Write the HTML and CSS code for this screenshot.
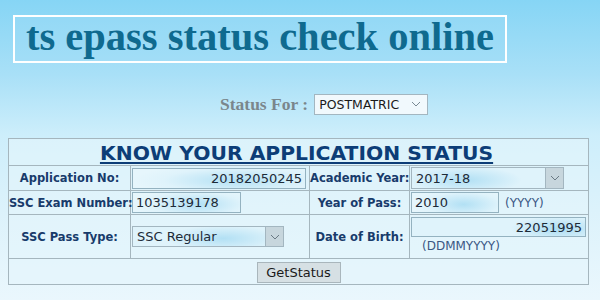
FILE: index.html
```html
<!DOCTYPE html>
<html>
<head>
<meta charset="utf-8">
<link rel="stylesheet" href="styles.css">
</head>
<body>
<div class="page">
  <header class="banner"><h1 class="banner-title">ts epass status check online</h1></header>
  <div class="status-for">
    <span class="status-label">Status For :</span>
    <span class="sel sel-plain">
      <select class="sel-input"><option>POSTMATRIC</option></select>
      <span class="chev"><svg width="10" height="6" viewBox="0 0 10 6"><path d="M1 1 L5 5 L9 1" fill="none" stroke="#7a8a94" stroke-width="1"/></svg></span>
    </span>
  </div>
  <table class="status-table">
    <colgroup><col class="c1"><col class="c2"><col class="c3"><col class="c4"></colgroup>
    <tr class="r-title"><th colspan="4"><span class="table-title">KNOW YOUR APPLICATION STATUS</span></th></tr>
    <tr class="r1">
      <td class="lbl">Application No:</td>
      <td class="fld"><input class="txt txt-app" value="20182050245"></td>
      <td class="lbl">Academic Year:</td>
      <td class="fld"><span class="sel sel-year"><select class="sel-input"><option>2017-18</option></select><span class="arrow"><svg width="10" height="6" viewBox="0 0 10 6"><path d="M1 1 L5 5 L9 1" fill="none" stroke="#6a7a84" stroke-width="1"/></svg></span></span></td>
    </tr>
    <tr class="r2">
      <td class="lbl">SSC Exam Number:</td>
      <td class="fld"><input class="txt txt-ssc" value="1035139178"></td>
      <td class="lbl">Year of Pass:</td>
      <td class="fld"><div class="inline-row"><input class="txt txt-yop" value="2010"><span class="hint">(YYYY)</span></div></td>
    </tr>
    <tr class="r3">
      <td class="lbl">SSC Pass Type:</td>
      <td class="fld"><span class="sel sel-type"><select class="sel-input"><option>SSC Regular</option></select><span class="arrow"><svg width="10" height="6" viewBox="0 0 10 6"><path d="M1 1 L5 5 L9 1" fill="none" stroke="#6a7a84" stroke-width="1"/></svg></span></span></td>
      <td class="lbl">Date of Birth:</td>
      <td class="fld fld-dob"><input class="txt txt-dob" value="22051995"><div class="hint hint-dob">(DDMMYYYY)</div></td>
    </tr>
    <tr class="r4"><td colspan="4" class="btn-cell"><button class="btn">GetStatus</button></td></tr>
  </table>
</div>
</body>
</html>
```
FILE: styles.css
```css
html, body { margin: 0; padding: 0; }
body {
  width: 600px; height: 300px; overflow: hidden;
  background: linear-gradient(180deg, #86d5f5 0%, #a9e0f7 25%, #cdeefb 45%, #dcf2fb 70%, #eaf7fd 100%);
  font-family: "DejaVu Sans", Verdana, sans-serif;
}
.page { padding-top: 15px; }
.banner { margin-left: 13px; width: 490px; border: 2px solid #ffffff; background: rgba(160, 222, 246, 0.35); height: 44px; display: flex; align-items: center; justify-content: center; }
.banner-title { margin: 0; font-family: "Liberation Serif", "Times New Roman", serif; font-weight: bold; font-size: 40.5px; line-height: 44px; color: #0f6a8f; white-space: nowrap; letter-spacing: 0; position: relative; top: -2px; }
.status-for { margin-top: 30px; padding-left: 220px; display: flex; align-items: center; gap: 6px; height: 22px; }
.status-label { font-family: "Liberation Serif", "Times New Roman", serif; font-weight: bold; font-size: 17.5px; color: #7a868c; }
.sel { display: inline-flex; align-items: stretch; box-sizing: border-box; border: 1px solid #a3b6c0; }
.sel-input { appearance: none; -webkit-appearance: none; border: none; background: transparent; font-family: "DejaVu Sans", Verdana, sans-serif; font-size: 13px; color: #1d2b38; padding: 0 0 0 4px; margin: 0; flex: 1; outline: none; }
.sel-plain { width: 114px; height: 21px; background: #f1f9fd; }
.sel-plain .sel-input { font-size: 12.5px; padding-left: 4px; color: #1a1a1a; }
.chev { display: flex; align-items: center; padding: 0 6px 0 2px; }
.arrow { width: 17px; display: flex; align-items: center; justify-content: center; background: #c7d6dd; border-left: 1px solid #a3b6c0; }
.status-table { margin-top: 23px; margin-left: 8px; width: 580px; border-collapse: collapse; table-layout: fixed; border: 1px solid #9eb0b8; background: rgba(228, 245, 252, 0.6); }
.c1 { width: 122px; } .c2 { width: 179px; } .c3 { width: 100px; } .c4 { width: 179px; }
.status-table td, .status-table th { border: 1px solid #a5b6be; padding: 0; }
.r-title th { height: 26px; text-align: center; vertical-align: bottom; padding-bottom: 0; }
.table-title { font-family: "DejaVu Sans", Verdana, sans-serif; font-weight: bold; font-size: 20.3px; color: #0c3d77; text-decoration: underline; text-underline-offset: 2px; letter-spacing: 0; line-height: 24px; position: relative; left: -2px; }
.r1 td { height: 24px; } .r2 td { height: 23px; } .r3 td { height: 41px; } .r4 td { height: 25px; }
.lbl { text-align: center; font-weight: bold; font-size: 11.5px; color: #183b6b; white-space: nowrap; }
.fld { padding-left: 1px !important; }
.txt { box-sizing: border-box; border: 1px solid #94b2c0; height: 21px; font-family: "DejaVu Sans", Verdana, sans-serif; font-size: 13px; color: #1d2b38; padding: 0 3px; margin: 0; outline: none; display: block;
  background: radial-gradient(ellipse 60% 90% at 60% 60%, #b2e0f4 0%, #dff3fb 70%, #e6f6fc 100%); }
.txt-app { width: 174px; text-align: right; }
.txt-ssc { width: 109px; }
.sel-year { width: 153px; height: 22px; background: radial-gradient(ellipse 50% 90% at 35% 60%, #b2e0f4 0%, #dff3fb 75%); }
.sel-type { width: 152px; height: 21px; background: radial-gradient(ellipse 50% 90% at 60% 60%, #b2e0f4 0%, #dff3fb 75%); }
.inline-row { display: flex; align-items: center; gap: 6px; }
.txt-yop { width: 88px; }
.hint { font-size: 12px; color: #3a5784; }
.fld-dob { vertical-align: top; padding-top: 2px !important; }
.txt-dob { width: 175px; height: 20px; text-align: right; background: radial-gradient(ellipse 40% 100% at 85% 60%, #aadcf2 0%, #dff3fb 70%); }
.hint-dob { padding-left: 11px; margin-top: 2px; }
.btn-cell { text-align: center; }
.btn { box-sizing: border-box; width: 84px; height: 21px; border: 1px solid #a9b6bc; background: #d6e0e4; font-family: "DejaVu Sans", Verdana, sans-serif; font-size: 13px; color: #1a1a1a; padding: 0; margin-top: 1px; }
```
